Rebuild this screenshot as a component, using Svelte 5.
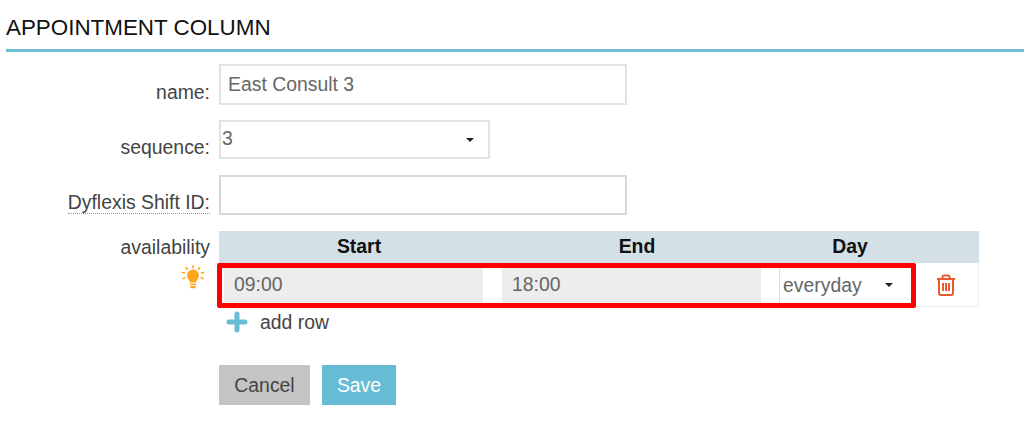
<script>
  let name = $state('East Consult 3');
  let sequence = $state('3');
  let shiftId = $state('');
</script>

<div class="page">
  <h1 class="title">APPOINTMENT COLUMN</h1>

  <form class="form" onsubmit={(e) => e.preventDefault()}>
    <div class="row row-name">
      <label class="label" for="name">name:</label>
      <input id="name" class="input wide" bind:value={name} />
    </div>

    <div class="row row-seq">
      <label class="label" for="sequence">sequence:</label>
      <div id="sequence" class="select seq">
        <span class="seq-val">{sequence}</span>
        <span class="caret"></span>
      </div>
    </div>

    <div class="row row-shift">
      <label class="label dotted" for="shift">Dyflexis Shift ID:</label>
      <input id="shift" class="input wide" bind:value={shiftId} />
    </div>

    <div class="row row-avail">
      <div class="avail-side">
        <span class="label">availability</span>
        <!-- Lightbulb hint -->
        <svg class="bulb" viewBox="0 0 24 24" fill="none">
          <g stroke="#ffa51f" stroke-width="1.6" stroke-linecap="round">
            <line x1="12" y1="0.8" x2="12" y2="2.8"/>
            <line x1="5.2" y1="2.6" x2="6.4" y2="4.2"/>
            <line x1="18.8" y1="2.6" x2="17.6" y2="4.2"/>
            <line x1="1.4" y1="7.4" x2="3.4" y2="8"/>
            <line x1="22.6" y1="7.4" x2="20.6" y2="8"/>
            <line x1="2" y1="13.4" x2="3.8" y2="12.8"/>
            <line x1="22" y1="13.4" x2="20.2" y2="12.8"/>
          </g>
          <path d="M12 4.6a6 6 0 0 0-6 6c0 2.4 1.500 3.600 2.500 5.300.4.700.5 1.200.6 1.700h5.800c.1-.5.2-1 .6-1.700 1-1.700 2.500-2.900 2.500-5.300a6 6 0 0 0-6-6z" fill="#ffa51f"/>
          <rect x="9" y="18.600" width="6" height="1.500" fill="#ffa51f"/>
          <rect x="9.300" y="21" width="5.400" height="2.200" fill="#ffa51f"/>
        </svg>
      </div>

      <div class="avail-main">
        <div class="table">
          <div class="thead">
            <div>Start</div>
            <div>End</div>
            <div>Day</div>
            <div></div>
          </div>
          <div class="tbody">
            <div class="cell"><div class="time">09:00</div></div>
            <div class="cell"><div class="time">18:00</div></div>
            <div class="cell">
              <div class="day">
                <span>everyday</span>
                <span class="caret"></span>
              </div>
            </div>
            <div class="cell trash-cell">
              <!-- Trash can -->
              <svg class="trash" viewBox="0 0 20 22" fill="none" stroke="#e85a30" stroke-width="2">
                <path d="M1 5h18"/>
                <path d="M6.500 5V2.800A1.300 1.300 0 0 1 7.800 1.500h4.400a1.300 1.300 0 0 1 1.300 1.300V5"/>
                <path d="M3 5v14a2 2 0 0 0 2 2h10a2 2 0 0 0 2-2V5"/>
                <path d="M7 9v8M10 9v8M13 9v8"/>
              </svg>
            </div>
          </div>
          <div class="highlight"></div>
        </div>

        <button type="button" class="add-row">
          <svg class="plus" viewBox="0 0 22 22" fill="none" stroke="#66bcd4" stroke-width="5" stroke-linecap="round">
            <path d="M11 3v16M3 11h16"/>
          </svg>
          <span>add row</span>
        </button>
      </div>
    </div>

    <div class="actions">
      <button type="button" class="btn cancel">Cancel</button>
      <button type="submit" class="btn save">Save</button>
    </div>
  </form>
</div>

<style>
  :global(body) {
    margin: 0;
    background: #fff;
    font-family: "Liberation Sans", Arial, sans-serif;
  }

  .page {
    width: 1024px;
    height: 432px;
    overflow: hidden;
    padding-left: 6px;
    box-sizing: border-box;
  }

  .title {
    margin: 0;
    height: 49px;
    box-sizing: content-box;
    padding: 0;
    font-size: 22.4px;
    font-weight: 400;
    line-height: 55px;
    color: #111;
    border-bottom: 3px solid #6cbcd2;
  }

  .form {
    display: flex;
    flex-direction: column;
    padding-top: 12px;
    margin-left: -6px;
  }

  .row {
    display: grid;
    grid-template-columns: 210px 1fr;
    column-gap: 9px;
  }
  .row-seq { margin-top: 15px; }
  .row-shift { margin-top: 16px; }
  .row-avail { margin-top: 16px; }

  .label {
    justify-self: end;
    align-self: end;
    font-size: 19.4px;
    line-height: 22px;
    color: #444;
  }
  .row-name .label { padding-bottom: 2px; }
  .row-seq .label { padding-bottom: 1px; }
  .row-shift .label { margin-bottom: 1px; line-height: 21px; }
  .dotted { border-bottom: 1px dotted #999; }

  .input {
    box-sizing: border-box;
    height: 41px;
    padding: 0 7px;
    font: inherit;
    font-size: 19.4px;
    color: #666;
    border: 2px solid #e2e2e2;
    border-radius: 0;
    outline: none;
    background: #fff;
  }
  .wide { width: 408px; }
  .row-shift .input { height: 40px; border-color: #d8d8d8; }

  .select { display: flex; align-items: center; justify-content: space-between; }
  .seq {
    box-sizing: border-box;
    width: 271px;
    height: 39px;
    padding: 0 14px 0 1px;
    border: 2px solid #e2e2e2;
    font-size: 19.4px;
    color: #666;
  }
  .seq-val { margin-top: -3px; }

  .caret {
    width: 0;
    height: 0;
    border-left: 4.500px solid transparent;
    border-right: 4.500px solid transparent;
    border-top: 4.500px solid #222;
  }

  .avail-side {
    display: flex;
    flex-direction: column;
    align-items: flex-end;
  }
  .avail-side .label { align-self: flex-end; margin-top: 5px; }
  .bulb { width: 24px; height: 24px; margin: 7px 5px 0 0; }

  .avail-main { width: 760px; }

  .table { position: relative; width: 760px; }
  .thead, .tbody {
    display: grid;
    grid-template-columns: 280px 276px 150px 54px;
  }
  .thead {
    height: 32px;
    background: #d3e0e5;
    font-size: 19.4px;
    font-weight: 700;
    line-height: 31px;
    color: #111;
    text-align: center;
  }
  .tbody {
    height: 44px;
    box-sizing: border-box;
    border: 1px solid #ececec;
    border-top: 0;
  }
  .cell { display: flex; align-items: center; }
  .time {
    box-sizing: border-box;
    width: 259px;
    height: 36px;
    margin-left: 4px;
    padding-left: 10px;
    background: #ededed;
    font-size: 19.4px;
    line-height: 34px;
    color: #666;
  }
  .cell:nth-child(2) .time { margin-left: 2px; }

  .day {
    box-sizing: border-box;
    display: flex;
    align-items: center;
    justify-content: space-between;
    width: 136px;
    height: 38px;
    margin-left: 3px;
    padding: 1px 22px 0 3px;
    border-left: 1px solid #ddd;
    font-size: 19.4px;
    color: #666;
  }

  .trash-cell { justify-content: center; }
  .trash { width: 20px; height: 22px; margin-right: 14px; }

  .highlight {
    position: absolute;
    left: -2px;
    top: 32px;
    width: 699px;
    height: 45px;
    box-sizing: border-box;
    border: 5px solid #ff0000;
    border-radius: 2px;
    pointer-events: none;
  }

  .add-row {
    display: flex;
    align-items: center;
    gap: 12px;
    margin-top: 4px;
    padding: 0 0 0 7px;
    height: 22px;
    background: none;
    border: 0;
    font: inherit;
    font-size: 19.4px;
    color: #444;
  }
  .plus { width: 22px; height: 22px; }

  .actions {
    display: flex;
    gap: 12px;
    margin: 32px 0 0 219px;
  }
  .btn {
    height: 40px;
    border: 0;
    font: inherit;
    font-size: 19.4px;
    padding: 0;
  }
  .cancel { width: 91px; background: #c4c4c4; color: #444; }
  .save { width: 74px; background: #66bcd4; color: #fff; }
</style>
